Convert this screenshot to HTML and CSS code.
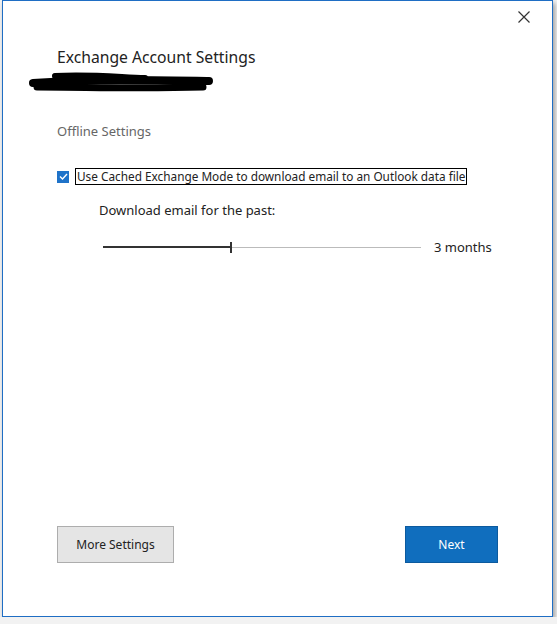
FILE: index.html
```html
<!DOCTYPE html>
<html lang="en">
<head>
    <meta charset="UTF-8">
    <meta name="viewport" content="width=device-width, initial-scale=1.0">
    <title>Exchange Account Settings</title>
    <link rel="stylesheet" href="styles.css">
</head>
<body>
    <div class="window">
        <div class="titlebar">
            <button class="close" aria-label="Close">
                <svg width="12" height="12" viewBox="0 0 12 12"><path d="M0.5 0.5 L11.5 11.5 M11.5 0.5 L0.5 11.5" stroke="#333" stroke-width="1.2" fill="none"/></svg>
            </button>
        </div>
        <div class="content">
            <h1 class="heading">Exchange Account Settings</h1>
            <svg class="redact" width="190" height="26" viewBox="0 0 190 26">
                <path d="M28 7 C60 5, 90 8, 118 9" stroke="#000" stroke-width="6" stroke-linecap="round" fill="none"/>
                <path d="M6 14 C60 10, 110 11, 182 12" stroke="#000" stroke-width="8" stroke-linecap="round" fill="none"/>
                <path d="M10 18 C60 18, 110 20, 176 18" stroke="#000" stroke-width="7" stroke-linecap="round" fill="none"/>
            </svg>
            <div class="section-title">Offline Settings</div>
            <label class="cached">
                <span class="check">
                    <svg width="9" height="7" viewBox="0 0 9 7"><path d="M1 3.5 L3.5 6 L8 1" stroke="#fff" stroke-width="1.4" fill="none"/></svg>
                </span>
                <span class="cached-text">Use Cached Exchange Mode to download email to an Outlook data file</span>
            </label>
            <div class="download">
                <div class="download-label">Download email for the past:</div>
                <div class="slider-row">
                    <div class="slider">
                        <div class="track-fill"></div>
                        <div class="thumb"></div>
                        <div class="track-rest"></div>
                    </div>
                    <span class="slider-value">3 months</span>
                </div>
            </div>
        </div>
        <div class="footer">
            <button class="btn btn-more">More Settings</button>
            <button class="btn btn-next">Next</button>
        </div>
    </div>
</body>
</html>
```

FILE: styles.css
```css
body { margin: 0; background: #f2f2f2; font-family: "Noto Sans", "Open Sans", sans-serif; color: #222; }
.window { width: 549px; height: 615px; margin-left: 2px; border: 1px solid #1f6ec4; background: #fff; box-shadow: 2px 3px 5px rgba(0,0,0,0.35); display: flex; flex-direction: column; }
.titlebar { display: flex; justify-content: flex-end; height: 40px; }
.close { border: none; background: none; padding: 0; margin: 10px 22px 0 0; width: 12px; height: 12px; cursor: pointer; display: flex; }
.content { flex: 1; padding-left: 54px; }
.heading { font-size: 15.7px; font-weight: normal; margin: 4px 0 0; line-height: 24px; color: #222; }
.redact { display: block; margin: 0 0 0 -30px; }
.section-title { color: #666; font-size: 13px; margin-top: 27px; line-height: 18px; }
.cached { display: flex; align-items: center; margin-top: 28px; gap: 6px; }
.check { width: 12px; height: 12px; background: #1f73c9; display: flex; align-items: center; justify-content: center; }
.cached-text { border: 1px solid #000; font-size: 11.8px; padding: 0 1px; line-height: 15px; }
.download { padding-left: 42px; }
.download-label { font-size: 13px; margin-top: 16px; line-height: 18px; }
.slider-row { display: flex; align-items: center; margin-top: 19px; padding-left: 4px; gap: 13px; }
.slider { display: flex; align-items: center; width: 318px; height: 12px; }
.track-fill { width: 127px; height: 2px; background: #333; }
.thumb { width: 2px; height: 11px; background: #333; }
.track-rest { flex: 1; height: 1px; background: #bbb; }
.slider-value { font-size: 13px; }
.footer { display: flex; justify-content: space-between; padding: 0 54px 53px 54px; }
.btn { font-family: inherit; font-size: 12px; height: 37px; cursor: pointer; }
.btn-more { width: 117px; background: #e5e5e5; border: 1px solid #adadad; color: #222; }
.btn-next { width: 93px; background: #106ebe; border: 1px solid #0c5a9e; color: #fff; }
```
